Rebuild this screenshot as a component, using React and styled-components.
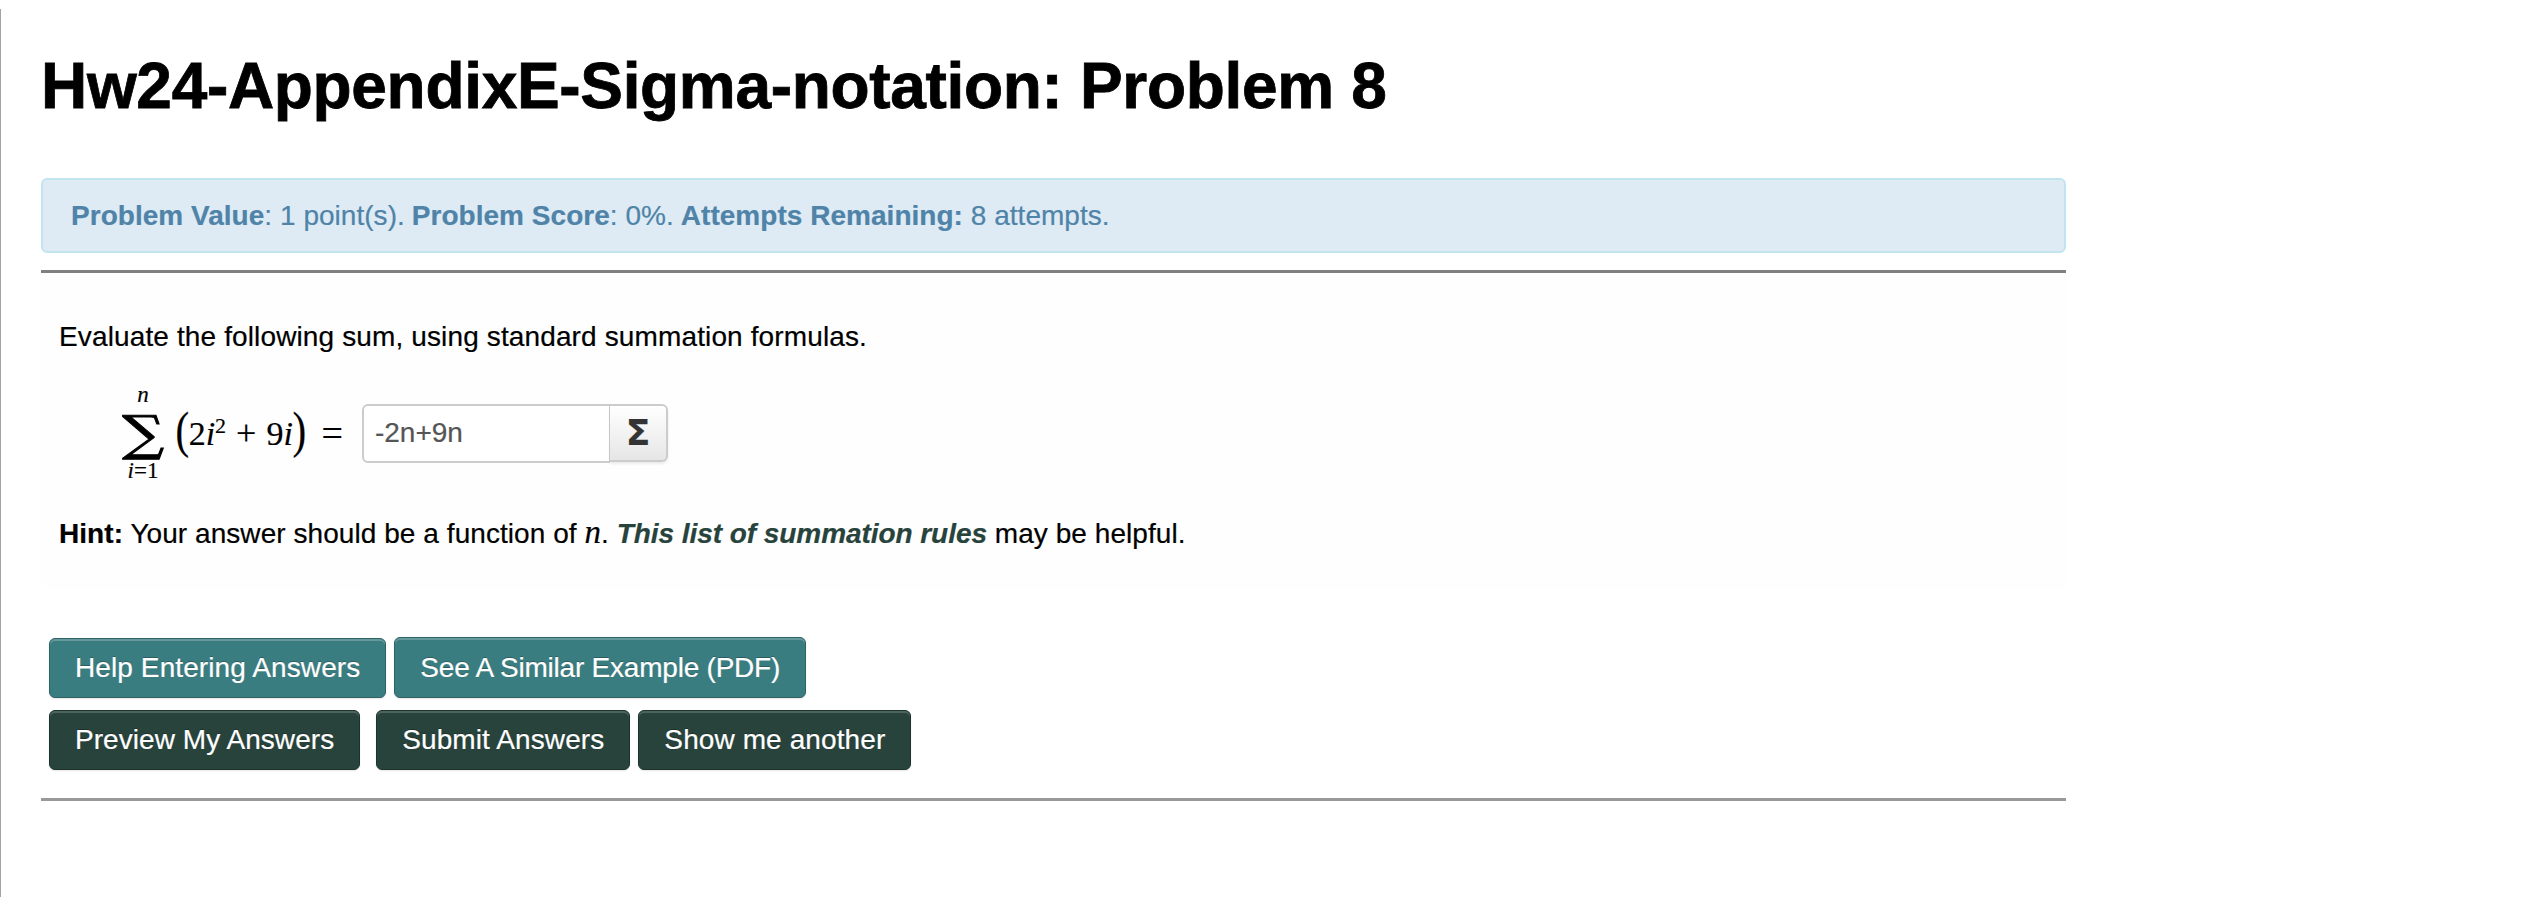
import styled, { createGlobalStyle } from 'styled-components'

const GlobalStyle = createGlobalStyle`
  html, body {
    margin: 0;
    padding: 0;
    background: #ffffff;
    color: #000000;
    font-family: "Liberation Sans", Arial, sans-serif;
    -webkit-text-stroke: 0.2px;
  }
`

const Page = styled.div`
  box-sizing: border-box;
  margin-top: 9px;
  min-height: 888px;
  padding: 43px 0 0 40px;
  border-left: 1.5px solid #a3a3a3;
`

const Column = styled.div`
  width: 2025px;
`

const Title = styled.h1`
  margin: 0 0 58px;
  font-size: 64px;
  line-height: 68px;
  font-weight: 700;
  letter-spacing: -0.32px;
  -webkit-text-stroke: 0.8px;
`

const Alert = styled.div`
  box-sizing: border-box;
  display: flex;
  align-items: center;
  gap: 7px;
  height: 75px;
  padding-left: 28px;
  background: #deebf5;
  border: 2px solid #c2e4ee;
  border-radius: 6px;
  color: #4f83a8;
  font-size: 28px;
  letter-spacing: 0.03px;
`

const Rule = styled.hr`
  height: 3px;
  margin: 17px 0 0;
  border: 0;
  background: ${(p) => p.$color};
`

const Panel = styled.div`
  box-sizing: border-box;
  height: 317px;
  padding: 44px 18px 0;
  background: #fefefe;
  font-size: 28px;
  line-height: 40px;
  letter-spacing: 0.06px;
`

const Paragraph = styled.p`
  margin: 0;
`

const Intro = styled(Paragraph)`
  letter-spacing: 0.13px;
`

const MathRow = styled.div`
  display: flex;
  align-items: center;
  height: 100px;
  margin: 26px 0 29px;
  padding-left: 65px;
  font-family: "Liberation Serif", "Times New Roman", serif;
  letter-spacing: 0;
`

const SumStack = styled.div`
  display: flex;
  flex-direction: column;
  align-items: center;
  width: 38px;
`

const Limit = styled.span`
  font-size: 23px;
  line-height: 24px;
  font-style: ${(p) => (p.$italic ? 'italic' : 'normal')};
`

const SumGlyph = styled.span`
  font-family: "DejaVu Serif", serif;
  font-size: 48px;
  line-height: 52px;
  transform: scaleX(1.22);
  -webkit-text-stroke: 1px;
`

const Expression = styled.span`
  display: flex;
  align-items: center;
  margin-left: 12px;
  font-size: 34px;
  line-height: 40px;
`

const Paren = styled.span`
  display: inline-block;
  font-size: 50px;
  line-height: 40px;
  transform: translateY(-3px) scaleX(0.82);
`

const Terms = styled.span`
  display: inline-block;
  margin: 0 -2px;
  white-space: nowrap;
`

const Var = styled.i`
  font-style: italic;
`

const Sup = styled.sup`
  font-size: 22px;
  line-height: 0;
`

const Plus = styled.span`
  margin: 0 10px;
  font-size: 36px;
`

const Equals = styled.span`
  margin: 0 19px 0 14px;
  font-size: 38px;
  line-height: 40px;
`

const InputGroup = styled.div`
  display: flex;
  width: 306px;
  height: 59px;
`

const AnswerInput = styled.input`
  box-sizing: border-box;
  width: 248px;
  height: 59px;
  padding: 0 11px;
  background: #ffffff;
  border: 2px solid #cccccc;
  border-right-width: 1px;
  border-radius: 6px 0 0 6px;
  color: #555555;
  font-family: "Liberation Sans", Arial, sans-serif;
  font-size: 28px;
  outline: none;
`

const SigmaButton = styled.button`
  box-sizing: border-box;
  width: 58px;
  height: 58px;
  padding: 0;
  background: linear-gradient(#ffffff, #e6e6e6);
  border: 2px solid #cccccc;
  border-left: 0;
  border-radius: 0 6px 6px 0;
  box-shadow: 0 2px 3px rgba(0, 0, 0, 0.08);
  color: #333333;
  font-family: "DejaVu Sans", sans-serif;
  font-size: 36px;
  font-weight: 700;
`

const HintLink = styled.em`
  color: #27433c;
  font-style: italic;
  font-weight: 700;
  letter-spacing: -0.06px;
`

const MathVar = styled.i`
  font-family: "Liberation Serif", "Times New Roman", serif;
  font-size: 33px;
`

const Actions = styled.div`
  display: flex;
  flex-direction: column;
  gap: 12px;
  margin: 47px 0 28px 8px;
`

const ButtonRow = styled.div`
  display: flex;
  align-items: flex-end;
  gap: ${(p) => p.$gap}px;
`

const Button = styled.button`
  box-sizing: border-box;
  height: ${(p) => p.$height || 60}px;
  margin-left: ${(p) => p.$offset || 0}px;
  padding: 0 25px;
  background: ${(p) => (p.$dark ? '#27433c' : '#3a7d80')};
  border: 1px solid ${(p) => (p.$dark ? '#1d332d' : '#2e6366')};
  border-radius: 6px;
  box-shadow:
    inset 0 2px 0 ${(p) => (p.$dark ? 'rgba(255,255,255,0.18)' : 'rgba(255,255,255,0.22)')},
    0 1px 2px rgba(0, 0, 0, 0.1);
  color: #ffffff;
  font-family: "Liberation Sans", Arial, sans-serif;
  font-size: 28px;
  letter-spacing: ${(p) => p.$tracking ?? 0.1}px;
  text-shadow: 0 -1px 0 rgba(0, 0, 0, 0.25);
  white-space: nowrap;
`

export default function App() {
  return (
    <>
      <GlobalStyle />
      <Page>
        <Column>
          <Title>Hw24-AppendixE-Sigma-notation: Problem 8</Title>
          <Alert>
            <span><b>Problem Value</b>: 1 point(s).</span>
            <span><b>Problem Score</b>: 0%.</span>
            <span><b>Attempts Remaining:</b> 8 attempts.</span>
          </Alert>
          <Rule $color="#808080" />
          <Panel>
            <Intro>Evaluate the following sum, using standard summation formulas.</Intro>
            <MathRow>
              <SumStack>
                <Limit $italic>n</Limit>
                <SumGlyph>∑</SumGlyph>
                <Limit><Var>i</Var>=1</Limit>
              </SumStack>
              <Expression>
                <Paren>(</Paren>
                <Terms>
                  2<Var>i</Var><Sup>2</Sup><Plus>+</Plus>9<Var>i</Var>
                </Terms>
                <Paren>)</Paren>
              </Expression>
              <Equals>=</Equals>
              <InputGroup>
                <AnswerInput defaultValue="-2n+9n" />
                <SigmaButton>Σ</SigmaButton>
              </InputGroup>
            </MathRow>
            <Paragraph>
              <b>Hint:</b> Your answer should be a function of <MathVar>n</MathVar>. <HintLink>This list of summation rules</HintLink> may be helpful.
            </Paragraph>
          </Panel>
          <Actions>
            <ButtonRow $gap={8}>
              <Button>Help Entering Answers</Button>
              <Button $height={61} $tracking={-0.22}>See A Similar Example (PDF)</Button>
            </ButtonRow>
            <ButtonRow $gap={8}>
              <Button $dark $tracking={0.05}>Preview My Answers</Button>
              <Button $dark $offset={8}>Submit Answers</Button>
              <Button $dark>Show me another</Button>
            </ButtonRow>
          </Actions>
          <Rule $color="#999999" />
        </Column>
      </Page>
    </>
  )
}
